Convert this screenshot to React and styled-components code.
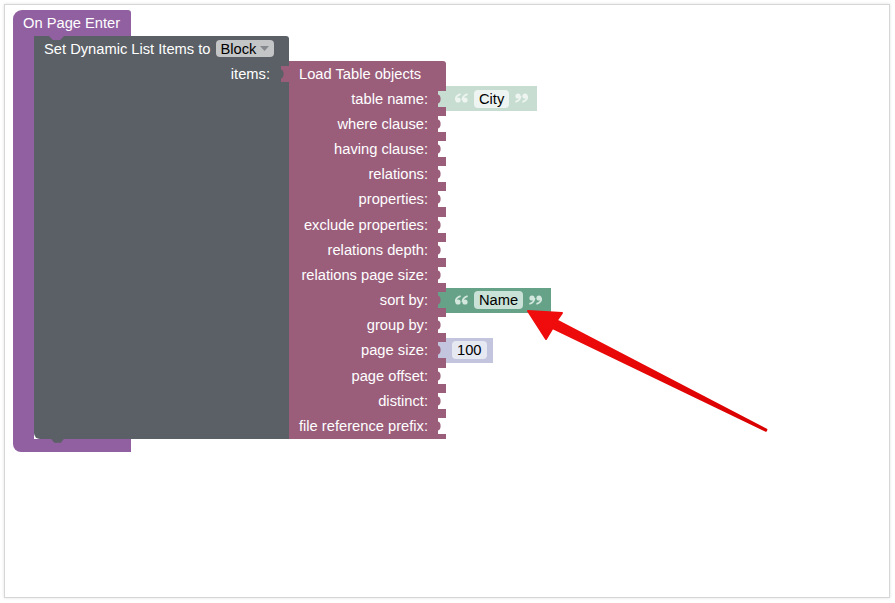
import React from 'react'
import styled, { createGlobalStyle } from 'styled-components'

const colours = {
  hat: '#9160a1',
  statement: '#5b5f66',
  table: '#9a5e7b',
  text: '#66a288',
  textField: '#c9e1d6',
  textFaded: '#c7ddd2',
  textFadedField: '#eef4f1',
  number: '#c2c5dd',
  numberField: '#e7e9f2',
  dropdown: '#c4c5c7'
}

const GlobalStyle = createGlobalStyle`
  html, body {
    margin: 0;
    background: #fff;
  }
  body {
    font-family: 'Liberation Sans', Arial, sans-serif;
  }
`

const Frame = styled.div`
  position: relative;
  box-sizing: border-box;
  width: 886px;
  height: 594px;
  margin: 4px;
  padding: 5px 0 0 8px;
  border: 1px solid #d6d6d6;
  box-shadow: 0 0 3px rgba(0, 0, 0, 0.12);
  background: #fff;
  overflow: hidden;
`

const HatBlock = styled.div`
  display: inline-flex;
  flex-direction: column;
  color: #fff;
  font-size: 14.7px;
`

const HatHeader = styled.div`
  display: flex;
  align-items: center;
  box-sizing: border-box;
  width: 118px;
  height: 26px;
  padding-left: 10px;
  background: ${colours.hat};
  border-radius: 9px 3px 0 0;
`

const HatBody = styled.div`
  display: flex;
`

const HatRail = styled.div`
  width: 21px;
  background: ${colours.hat};
`

const HatFooter = styled.div`
  width: 118px;
  height: 13px;
  background: ${colours.hat};
  border-radius: 0 0 0 8px;
`

const StatementMain = styled.div`
  position: relative;
  display: flex;
  flex-direction: column;
  width: 255px;
  background: ${colours.statement};
  border-radius: 0 3px 0 6px;
  &::before {
    content: '';
    position: absolute;
    top: 0;
    left: 15px;
    width: 15px;
    height: 4px;
    background: ${colours.hat};
    clip-path: polygon(0 0, 100% 0, 75% 100%, 25% 100%);
  }
  &::after {
    content: '';
    position: absolute;
    bottom: -4px;
    left: 17px;
    width: 13px;
    height: 4px;
    background: ${colours.statement};
    clip-path: polygon(0 0, 100% 0, 75% 100%, 25% 100%);
  }
`

const TitleRow = styled.div`
  display: flex;
  align-items: center;
  gap: 5px;
  height: 25px;
  padding-left: 10px;
`

const Dropdown = styled.span`
  display: inline-flex;
  align-items: center;
  gap: 4px;
  height: 17px;
  padding: 0 5px;
  border-radius: 4px;
  background: ${colours.dropdown};
  color: #000;
`

const InputRow = styled.div`
  display: flex;
  align-items: center;
  justify-content: flex-end;
  height: 25px;
  padding-right: 19px;
`

const TableBlock = styled.div`
  display: flex;
  flex-direction: column;
  margin-top: 25px;
`

const TableTitle = styled.div`
  position: relative;
  display: flex;
  align-items: center;
  box-sizing: border-box;
  width: 157px;
  height: 25px;
  padding-left: 10px;
  background: ${colours.table};
  border-radius: 0 3px 0 0;
`

const Line = styled.div`
  display: flex;
  align-items: center;
  height: 25.2px;
`

const Label = styled.div`
  position: relative;
  display: flex;
  align-items: center;
  justify-content: flex-end;
  box-sizing: border-box;
  width: 157px;
  height: 100%;
  padding-right: 18px;
  background: ${colours.table};
  white-space: nowrap;
`

const TabSvg = styled.svg`
  position: absolute;
  top: 50%;
  margin-top: -8px;
  width: 8px;
  height: 16px;
  ${p => (p.$side === 'left' ? 'left: -8px;' : 'right: 0;')}
`

const ValueBlock = styled.div`
  position: relative;
  display: flex;
  align-items: center;
  gap: ${p => p.$gap}px;
  box-sizing: border-box;
  height: 100%;
  padding: ${p => p.$pad};
  background: ${p => p.$bg};
`

const QuoteSvg = styled.svg`
  display: block;
  width: 13px;
  height: 10px;
  align-self: flex-start;
  margin-top: 7px;
  ${p => p.$closing && 'transform: rotate(180deg);'}
`

const Field = styled.span`
  display: flex;
  align-items: center;
  height: 18px;
  padding: 0 5px;
  border-radius: 4px;
  background: ${p => p.$bg};
  color: #000;
`

const ArrowLayer = styled.svg`
  position: absolute;
  top: 0;
  left: 0;
  pointer-events: none;
`

const Tab = ({ colour, side }) => (
  <TabSvg $side={side} viewBox='0 0 8 16'>
    <path d='M8 0 H0 V3.5 C3.5 3.5 3.5 12.5 0 12.5 V16 H8 Z' fill={colour} />
  </TabSvg>
)

const Quote = ({ colour, closing }) => (
  <QuoteSvg $closing={closing} viewBox='0 0 13 10'>
    {[0, 7].map(x => (
      <g key={x} transform={`translate(${x} 0)`} fill={colour}>
        <circle cx='3' cy='7' r='2.6' />
        <path d='M5.6 1.2 C2.6 2 0.6 4 0.5 7' stroke={colour} strokeWidth='1.8' fill='none' />
      </g>
    ))}
  </QuoteSvg>
)

const TextValue = ({ children, bg, fieldBg, quoteColour }) => (
  <ValueBlock $bg={bg} $gap={6} $pad='0 9px 0 9px'>
    <Tab colour={bg} side='left' />
    <Quote colour={quoteColour} />
    <Field $bg={fieldBg}>{children}</Field>
    <Quote colour={quoteColour} closing />
  </ValueBlock>
)

const NumberValue = ({ children }) => (
  <ValueBlock $bg={colours.number} $gap={0} $pad='0 6px 0 6px'>
    <Tab colour={colours.number} side='left' />
    <Field $bg={colours.numberField}>{children}</Field>
  </ValueBlock>
)

const inputs = [
  { label: 'table name:', value: <TextValue bg={colours.textFaded} fieldBg={colours.textFadedField} quoteColour='#eef5f1'>City</TextValue> },
  { label: 'where clause:' },
  { label: 'having clause:' },
  { label: 'relations:' },
  { label: 'properties:' },
  { label: 'exclude properties:' },
  { label: 'relations depth:' },
  { label: 'relations page size:' },
  { label: 'sort by:', value: <TextValue bg={colours.text} fieldBg={colours.textField} quoteColour='#d3e7de'>Name</TextValue> },
  { label: 'group by:' },
  { label: 'page size:', value: <NumberValue>100</NumberValue> },
  { label: 'page offset:' },
  { label: 'distinct:' },
  { label: 'file reference prefix:' }
]

const Arrow = () => (
  <ArrowLayer width='880' height='590' viewBox='5 5 880 590'>
    <defs>
      <linearGradient id='arrowFill' x1='0' y1='0' x2='1' y2='1'>
        <stop offset='0' stopColor='#f20d0d' />
        <stop offset='1' stopColor='#d90000' />
      </linearGradient>
    </defs>
    <polygon
      points='528,311 562,313 556.8,320.4 766.4,429.6 766,430.8 552.6,328 546,339'
      fill='url(#arrowFill)'
      stroke='url(#arrowFill)'
      strokeWidth='2'
      strokeLinejoin='round'
    />
  </ArrowLayer>
)

const App = () => (
  <>
    <GlobalStyle />
    <Frame>
      <HatBlock>
        <HatHeader>On Page Enter</HatHeader>
        <HatBody>
          <HatRail />
          <StatementMain>
            <TitleRow>
              Set Dynamic List Items to
              <Dropdown>
                Block
                <svg width='9' height='5' viewBox='0 0 9 5'>
                  <path d='M0 0 H9 L4.5 5 Z' fill='#85888d' />
                </svg>
              </Dropdown>
            </TitleRow>
            <InputRow>items:</InputRow>
          </StatementMain>
          <TableBlock>
            <TableTitle>
              <Tab colour={colours.table} side='left' />
              Load Table objects
            </TableTitle>
            {inputs.map(input => (
              <Line key={input.label}>
                <Label>
                  {input.label}
                  {!input.value && <Tab colour='#fff' side='right' />}
                </Label>
                {input.value}
              </Line>
            ))}
          </TableBlock>
        </HatBody>
        <HatFooter />
      </HatBlock>
      <Arrow />
    </Frame>
  </>
)

export default App
